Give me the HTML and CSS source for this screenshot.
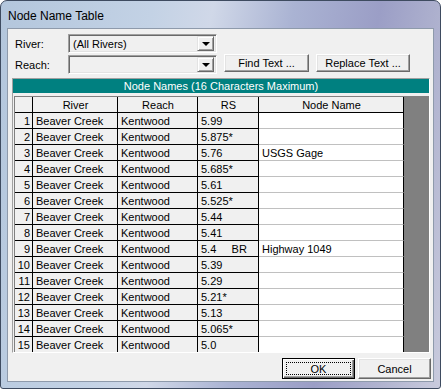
FILE: index.html
```html
<!DOCTYPE html>
<html lang="en">
  <head>
    <meta charset="UTF-8" />
    <title>Node Name Table</title>
    <link rel="stylesheet" href="styles.css">
  </head>
  <body>
    <div class="window">
      <div class="titlebar">Node Name Table</div>
      <div class="client">
        <div class="top">
          <div class="fields">
            <div class="field">
              <label>River:</label>
              <div class="combo"><span class="value">(All Rivers)</span><span class="drop"></span></div>
            </div>
            <div class="field">
              <label>Reach:</label>
              <div class="combo"><span class="value"></span><span class="drop"></span></div>
            </div>
          </div>
          <div class="actions">
            <button class="btn find">Find Text ...</button>
            <button class="btn replace">Replace Text ...</button>
          </div>
        </div>

        <div class="grid">
          <div class="caption">Node Names (16 Characters Maximum)</div>
          <div class="sheet">
            <table class="nodes">
              <thead>
                <tr>
                  <th class="num"></th>
                  <th class="river">River</th>
                  <th class="reach">Reach</th>
                  <th class="rs">RS</th>
                  <th class="name">Node Name</th>
                </tr>
              </thead>
              <tbody>
                <tr><td class="num">1</td><td>Beaver Creek</td><td>Kentwood</td><td>5.99</td><td class="name"></td></tr>
                <tr><td class="num">2</td><td>Beaver Creek</td><td>Kentwood</td><td>5.875*</td><td class="name"></td></tr>
                <tr><td class="num">3</td><td>Beaver Creek</td><td>Kentwood</td><td>5.76</td><td class="name">USGS Gage</td></tr>
                <tr><td class="num">4</td><td>Beaver Creek</td><td>Kentwood</td><td>5.685*</td><td class="name"></td></tr>
                <tr><td class="num">5</td><td>Beaver Creek</td><td>Kentwood</td><td>5.61</td><td class="name"></td></tr>
                <tr><td class="num">6</td><td>Beaver Creek</td><td>Kentwood</td><td>5.525*</td><td class="name"></td></tr>
                <tr><td class="num">7</td><td>Beaver Creek</td><td>Kentwood</td><td>5.44</td><td class="name"></td></tr>
                <tr><td class="num">8</td><td>Beaver Creek</td><td>Kentwood</td><td>5.41</td><td class="name"></td></tr>
                <tr><td class="num">9</td><td>Beaver Creek</td><td>Kentwood</td><td class="pre">5.4     BR</td><td class="name">Highway 1049</td></tr>
                <tr><td class="num">10</td><td>Beaver Creek</td><td>Kentwood</td><td>5.39</td><td class="name"></td></tr>
                <tr><td class="num">11</td><td>Beaver Creek</td><td>Kentwood</td><td>5.29</td><td class="name"></td></tr>
                <tr><td class="num">12</td><td>Beaver Creek</td><td>Kentwood</td><td>5.21*</td><td class="name"></td></tr>
                <tr><td class="num">13</td><td>Beaver Creek</td><td>Kentwood</td><td>5.13</td><td class="name"></td></tr>
                <tr><td class="num">14</td><td>Beaver Creek</td><td>Kentwood</td><td>5.065*</td><td class="name"></td></tr>
                <tr><td class="num">15</td><td>Beaver Creek</td><td>Kentwood</td><td>5.0</td><td class="name"></td></tr>
              </tbody>
            </table>
            <div class="filler"></div>
          </div>
        </div>

        <div class="footer">
          <button class="btn default"><span class="focus">OK</span></button>
          <button class="btn">Cancel</button>
        </div>
      </div>
    </div>
  </body>
</html>
```

FILE: styles.css
```css
* {
  box-sizing: border-box;
}
body {
  margin: 0;
  font-family: "Liberation Sans", Arial, sans-serif;
  font-size: 11px;
  color: #000;
}
.window {
  width: 441px;
  height: 389px;
  display: flex;
  flex-direction: column;
  padding: 0 6px 6px;
  border: 1px solid #3e4b60;
  border-radius: 7px 7px 3px 3px;
  background: linear-gradient(100deg, #b3c6dc 0%, #c3d2e5 30%, #d0d8e8 42%, #aab3d3 58%, #9b9ec6 75%, #b0b3cf 88%, #c9cbdd 100%);
}
.titlebar {
  height: 27px;
  padding: 2px 0 0 1px;
  display: flex;
  align-items: center;
  font-size: 12px;
}
.client {
  flex: 1;
  background: #f0f0f0;
  border: 1px solid #8e9aab;
}

/* river / reach selectors */
.top {
  height: 49px;
  display: flex;
  padding: 5px 0 0 7px;
}
.field {
  display: flex;
  align-items: center;
  height: 19px;
}
.field + .field {
  margin-top: 2px;
}
.field label {
  width: 53px;
}
.combo {
  width: 149px;
  height: 19px;
  display: flex;
  align-items: center;
  padding: 0 2px 0 4px;
  border: 1px solid;
  border-color: #a0a0a0 #fff #fff #a0a0a0;
  box-shadow: inset 1px 1px #696969, inset -1px -1px #e3e3e3;
  background: #f0f0f0;
}
.combo .value {
  flex: 1;
}
.drop {
  width: 17px;
  height: 15px;
  border: 1px solid;
  border-color: #e3e3e3 #696969 #696969 #e3e3e3;
  box-shadow: inset 1px 1px #fff, inset -1px -1px #a0a0a0;
  background: #f0f0f0;
  display: flex;
  align-items: center;
  justify-content: center;
}
.drop::after {
  content: "";
  border-left: 4px solid transparent;
  border-right: 4px solid transparent;
  border-top: 4px solid #000;
  margin-top: 1px;
}
.actions {
  display: flex;
  gap: 7px;
  margin: 20px 0 0 7px;
}

/* classic 3d buttons */
.btn {
  font: inherit;
  color: #000;
  height: 18px;
  padding: 0;
  border: 1px solid;
  border-color: #fff #696969 #696969 #fff;
  box-shadow: inset -1px -1px #a0a0a0, inset 1px 1px #e3e3e3;
  background: #f0f0f0;
}
.find {
  width: 85px;
}
.replace {
  width: 94px;
}

/* grid */
.grid {
  margin-left: 4px;
  width: 418px;
  height: 275px;
  border: 1px solid;
  border-color: #a0a0a0 #fff #fff #a0a0a0;
}
.caption {
  height: 14px;
  line-height: 14px;
  background: #008080;
  color: #fff;
  text-align: center;
}
.sheet {
  margin-top: 3px;
  height: 256px;
  overflow: hidden;
  display: flex;
  padding-left: 1px;
}
.nodes {
  border-collapse: separate;
  border-spacing: 0;
  table-layout: fixed;
  width: 390px;
  border-top: 1px solid #808080;
  border-left: 1px solid #808080;
}
.nodes th,
.nodes td {
  height: 16px;
  padding: 0 2px 0 3px;
  border-right: 1px solid #000;
  border-bottom: 1px solid #000;
  background: #f0f0f0;
  font-weight: normal;
  white-space: nowrap;
  overflow: hidden;
  text-align: left;
}
.nodes th {
  text-align: center;
}
.nodes th.num {
  width: 18px;
}
.nodes th.river {
  width: 85px;
}
.nodes th.reach {
  width: 80px;
}
.nodes th.rs {
  width: 61px;
}
.nodes th.name {
  width: 145px;
}
.nodes td.num {
  text-align: right;
  padding: 0 2px 0 0;
}
.nodes td.name {
  background: #fff;
  border-bottom-color: #c0c0c0;
}
.nodes td.pre {
  white-space: pre;
}
.filler {
  flex: 1;
  background: #808080;
}

.footer {
  display: flex;
  justify-content: flex-end;
  gap: 3px;
  padding: 5px 2px 0 0;
}
.footer .btn {
  width: 73px;
  height: 21px;
}
.footer .default {
  border-color: #000;
  box-shadow: inset 1px 1px #fff, inset -1px -1px #696969, inset -2px -2px #a0a0a0;
  padding: 3px;
}
.focus {
  display: block;
  height: 100%;
  line-height: 13px;
  border: 1px dotted #000;
}
```
